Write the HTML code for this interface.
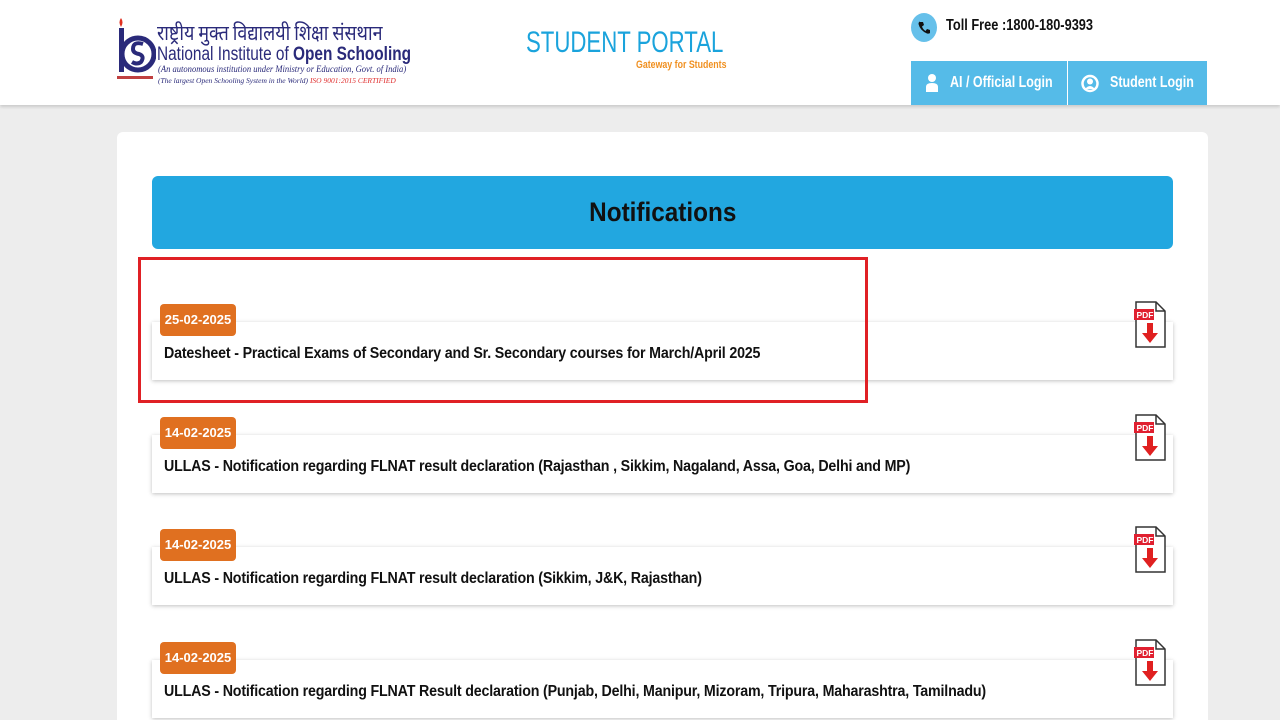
<!DOCTYPE html>
<html style="overflow:hidden"><head><meta charset="utf-8">
<style>
*{margin:0;padding:0;box-sizing:border-box}
html,body{width:1280px;height:720px;overflow:hidden}
body{background:#ededed;font-family:"Liberation Sans",sans-serif;position:relative}
.hdr{position:absolute;left:0;top:0;width:1280px;height:105px;background:#fff;box-shadow:0 2px 3px rgba(0,0,0,.15)}
.abs{position:absolute}
.sx{display:inline-block;transform-origin:left center;white-space:nowrap}
.card{position:absolute;left:117px;top:132px;width:1091px;height:588px;background:#fff;border-radius:6px 6px 0 0}
.title{position:absolute;left:152px;top:176px;width:1021px;height:73px;background:#22a7e0;border-radius:6px;text-align:center;line-height:73px;font-size:27px;font-weight:bold;color:#111}
.title span{display:inline-block;transform:scaleX(.9)}
.item{position:absolute;left:152px;width:1021px;height:58px;background:#fff;box-shadow:0 1px 4px rgba(0,0,0,.25)}
.item .t{position:absolute;left:12px;top:23px;font-size:16px;font-weight:bold;color:#111;white-space:nowrap;transform:scaleX(.89);transform-origin:left;letter-spacing:-0.2px}
.badge{position:absolute;left:160px;width:76px;height:32px;background:#e07020;border-radius:4px;color:#fff;font-weight:bold;font-size:13px;line-height:32px;text-align:center}
.pdf{position:absolute;left:1134px;width:32px;height:47px}
.btn{position:absolute;top:61px;height:44px;background:#55bbe8;color:#fff;font-weight:bold;font-size:16px;line-height:44px}
.btn span{position:absolute;transform:scaleX(.78);transform-origin:left;white-space:nowrap}
</style></head><body>
<div class="hdr">
  <svg class="abs" style="left:116px;top:16px" width="40" height="68" viewBox="0 0 40 68">
    <path d="M5 2 q3 4 0 9 q-3-5 0-9z" fill="#e03020"/>
    <rect x="3" y="12" width="5" height="44" fill="#2a2a7a"/>
    <circle cx="22" cy="38" r="16" fill="none" stroke="#2a2a7a" stroke-width="5"/>
    <path d="M27 28 q-10-3-10 5 q0 4 6 5 q6 2 2 8 q-4 3-9 0" fill="none" stroke="#2a2a7a" stroke-width="4"/>
    <rect x="1" y="60" width="36" height="3" fill="#c04040"/>
  </svg>
  <div class="abs" style="left:157px;top:20px;font-family:'Noto Sans CJK SC',sans-serif;font-size:21px;color:#2a2a7a;line-height:24px"><span class="sx" style="transform:scaleX(.85)">राष्ट्रीय मुक्त विद्यालयी शिक्षा संसथान</span></div>
  <div class="abs" style="left:157px;top:44px;font-size:19px;color:#2a2a7a"><span class="sx" style="transform:scaleX(.81)">National Institute of <b>Open Schooling</b></span></div>
  <div class="abs" style="left:158px;top:65px;font-family:'Liberation Serif',serif;font-style:italic;font-size:9.5px;color:#2a2a7a"><span class="sx" style="transform:scaleX(.9)">(An autonomous institution under Ministry or Education, Govt. of India)</span></div>
  <div class="abs" style="left:158px;top:76px;font-family:'Liberation Serif',serif;font-style:italic;font-size:7.5px;color:#2a2a7a">(The largest Open Schooling System in the World) <span style="color:#e03030">ISO 9001:2015 CERTIFIED</span></div>
  <div class="abs" style="left:526px;top:26px;font-size:30px;color:#1aa3dc"><span class="sx" style="transform:scaleX(.74)">STUDENT PORTAL</span></div>
  <div class="abs" style="left:636px;top:59px;font-size:11px;font-weight:bold;color:#f09020"><span class="sx" style="transform:scaleX(.8)">Gateway for Students</span></div>
  <div class="abs" style="left:911px;top:13px;width:26px;height:29px;border-radius:50%;background:#66c0ea"></div>
  <svg class="abs" style="left:918px;top:21px" width="12" height="13" viewBox="0 0 12 13"><path d="M2 1 l3 0 l1 3 l-2 1.5 q1 3 3.5 4.5 l1.5-2 l3 1 v3 q-1 1-3 0.5 q-7-3-8.5-9.5 q0-2 1.5-2.5z" fill="#111"/></svg>
  <div class="abs" style="left:946px;top:17px;font-size:16px;font-weight:bold;color:#111"><span class="sx" style="transform:scaleX(.8)">Toll Free :1800-180-9393</span></div>
  <div class="btn" style="left:911px;width:156px"><svg class="abs" style="left:14px;top:12px" width="14" height="20" viewBox="0 0 14 20"><circle cx="7" cy="5" r="4" fill="#fff"/><path d="M1 19 v-5 q0-4 6-4 q6 0 6 4 v5z" fill="#fff"/></svg><span style="left:39px">AI / Official Login</span></div>
  <div class="btn" style="left:1068px;width:139px"><svg class="abs" style="left:13px;top:13px" width="18" height="19" viewBox="0 0 18 19"><circle cx="9" cy="9.5" r="7.5" fill="none" stroke="#fff" stroke-width="2.5"/><circle cx="9" cy="7.5" r="3" fill="#fff"/><path d="M4 15 q5-6 10 0" fill="#fff"/></svg><span style="left:42px">Student Login</span></div>
</div>
<div class="card"></div>
<div class="title"><span>Notifications</span></div>

<div class="item" style="top:322px"><div class="t">Datesheet - Practical Exams of Secondary and Sr. Secondary courses for March/April 2025</div></div>
<div class="badge" style="top:304px">25-02-2025</div>
<div class="item" style="top:435px"><div class="t">ULLAS - Notification regarding FLNAT result declaration (Rajasthan , Sikkim, Nagaland, Assa, Goa, Delhi and MP)</div></div>
<div class="badge" style="top:417px">14-02-2025</div>
<div class="item" style="top:547px"><div class="t">ULLAS - Notification regarding FLNAT result declaration (Sikkim, J&amp;K, Rajasthan)</div></div>
<div class="badge" style="top:529px">14-02-2025</div>
<div class="item" style="top:660px"><div class="t">ULLAS - Notification regarding FLNAT Result declaration (Punjab, Delhi, Manipur, Mizoram, Tripura, Maharashtra, Tamilnadu)</div></div>
<div class="badge" style="top:642px">14-02-2025</div>

<svg width="0" height="0" style="position:absolute"><defs><g id="p"><path d="M2 1 H22 L31 10 V46 H2 Z" fill="#fff" stroke="#333" stroke-width="1.5"/><path d="M22 1 V10 H31" fill="none" stroke="#333" stroke-width="1.5"/><rect x="0" y="8" width="20" height="11" fill="#e02030"/><text x="2.5" y="17" font-family="Liberation Sans" font-size="8.5" font-weight="bold" fill="#fff">PDF</text><path d="M13 22 h6 v10 h5 l-8 10 l-8-10 h5z" fill="#e02020"/></g></defs></svg>
<svg class="pdf" style="top:301px" viewBox="0 0 32 47"><use href="#p"/></svg>
<svg class="pdf" style="top:414px" viewBox="0 0 32 47"><use href="#p"/></svg>
<svg class="pdf" style="top:526px" viewBox="0 0 32 47"><use href="#p"/></svg>
<svg class="pdf" style="top:639px" viewBox="0 0 32 47"><use href="#p"/></svg>

<div class="abs" style="left:138px;top:257px;width:730px;height:146px;border:3px solid #e02025"></div>
</body></html>
